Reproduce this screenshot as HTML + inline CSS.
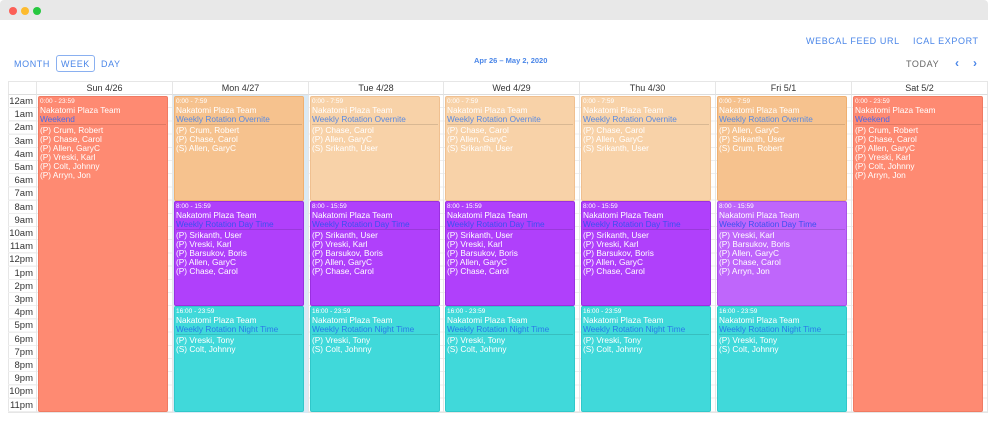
<!DOCTYPE html>
<html><head><meta charset="utf-8"><style>
*{box-sizing:border-box;margin:0;padding:0}
body{width:988px;height:421px;background:#fff;font-family:"Liberation Sans",sans-serif;position:relative;overflow:hidden}
.bar{position:absolute;left:0;top:0;width:988px;height:20px;background:#e8e8e8;border-radius:4px 4px 0 0}
.dot{position:absolute;top:7px;width:8px;height:8px;border-radius:50%}
.a{position:absolute;white-space:nowrap}
.lnk{color:#4a86e8;font-size:9px;letter-spacing:.6px}
.hd{position:absolute;top:81px;height:14px;border:1px solid #e6e6e6;border-bottom:1px solid #ddd;font-size:9px;color:#333;text-align:center;line-height:12px}
.col{position:absolute;top:95px;height:318px;border-left:1px solid #e6e6e6}
.tl{position:absolute;left:8px;width:28px;height:13.2px;border-bottom:1px solid #eee;font-size:9.5px;color:#333;text-align:right;padding-right:3px;line-height:13px}
.ev{position:absolute;width:130px;border-radius:2px;padding:0 1px;overflow:hidden;color:#fff;font-size:8.3px;line-height:9px;white-space:nowrap}
.ev .t{font-size:6.5px;line-height:8px;margin-top:1px}
.ev .r{color:#3f6fe8;border-bottom:1px solid rgba(0,0,0,.12);padding-bottom:0;margin-bottom:1px}
.R{background:#fe8a72;border:1px solid #f07a62}
.O{background:#f6c28e;border:1px solid #f0b070}
.L{background:#f8d2a8;border:1px solid #f0c090}
.P{background:#b040fb;border:1px solid #9a30e0}
.Q{background:#bf66fb;border:1px solid #a850e8}
.C{background:#40d9da;border:1px solid #30c8ca}
.O .r,.L .r{color:#5a8ae0}
.R .r{color:#4a6ae8}
.P .r,.Q .r{color:#3a50f0}
.C .r{color:#2a7ae8}
</style></head><body>
<div class="bar"><div class="dot" style="left:9px;background:#fc5f57"></div><div class="dot" style="left:21px;background:#fdbb2e"></div><div class="dot" style="left:33px;background:#27c840"></div></div>
<div class="a lnk" style="left:806px;top:36px">WEBCAL FEED URL</div>
<div class="a lnk" style="left:913px;top:36px">ICAL EXPORT</div>
<div class="a lnk" style="left:14px;top:59px">MONTH</div>
<div class="a" style="left:56px;top:55px;width:39px;height:17px;border:1px solid #8ab0f0;border-radius:3px"></div>
<div class="a lnk" style="left:61px;top:59px">WEEK</div>
<div class="a lnk" style="left:101px;top:59px">DAY</div>
<div class="a" style="left:474px;top:56px;font-size:7.5px;font-weight:bold;color:#4a86e8">Apr 26 – May 2, 2020</div>
<div class="a" style="left:906px;top:59px;font-size:9px;color:#666;letter-spacing:.6px">TODAY</div>
<div class="a" style="left:955px;top:56px;font-size:12px;color:#4a86e8;font-weight:bold">‹</div>
<div class="a" style="left:973px;top:56px;font-size:12px;color:#4a86e8;font-weight:bold">›</div>

<div class="hd" style="left:8px;width:29px"></div>
<div class="hd" style="left:36px;width:137px">Sun 4/26</div>
<div class="hd" style="left:172px;width:137px">Mon 4/27</div>
<div class="hd" style="left:308px;width:136px">Tue 4/28</div>
<div class="hd" style="left:443px;width:137px">Wed 4/29</div>
<div class="hd" style="left:579px;width:137px">Thu 4/30</div>
<div class="hd" style="left:715px;width:137px">Fri 5/1</div>
<div class="hd" style="left:851px;width:137px">Sat 5/2</div>

<div style="position:absolute;left:8px;top:95px;width:980px;height:318px;border:1px solid #e6e6e6;border-top:none;background:repeating-linear-gradient(to bottom,transparent 0,transparent 12.2px,#eee 12.2px,#eee 13.2px)"></div>
<div class="col" style="left:172px;width:136px;background:#dbeaf5"></div>
<div class="col" style="left:36px;width:0"></div><div class="col" style="left:308px;width:0"></div><div class="col" style="left:443px;width:0"></div><div class="col" style="left:579px;width:0"></div><div class="col" style="left:715px;width:0"></div><div class="col" style="left:851px;width:0"></div>

<div class="tl" style="top:95px">12am</div><div class="tl" style="top:108.2px">1am</div><div class="tl" style="top:121.4px">2am</div><div class="tl" style="top:134.6px">3am</div><div class="tl" style="top:147.8px">4am</div><div class="tl" style="top:161px">5am</div><div class="tl" style="top:174.2px">6am</div><div class="tl" style="top:187.4px">7am</div><div class="tl" style="top:200.6px">8am</div><div class="tl" style="top:213.8px">9am</div><div class="tl" style="top:227px">10am</div><div class="tl" style="top:240.2px">11am</div><div class="tl" style="top:253.4px">12pm</div><div class="tl" style="top:266.6px">1pm</div><div class="tl" style="top:279.8px">2pm</div><div class="tl" style="top:293px">3pm</div><div class="tl" style="top:306.2px">4pm</div><div class="tl" style="top:319.4px">5pm</div><div class="tl" style="top:332.6px">6pm</div><div class="tl" style="top:345.8px">7pm</div><div class="tl" style="top:359px">8pm</div><div class="tl" style="top:372.2px">9pm</div><div class="tl" style="top:385.4px">10pm</div><div class="tl" style="top:398.6px">11pm</div>

<div class="ev R" style="left:38px;top:96px;height:316px"><div class="t">0:00 - 23:59</div><div>Nakatomi Plaza Team</div><div class="r">Weekend</div><div>(P) Crum, Robert</div><div>(P) Chase, Carol</div><div>(P) Allen, GaryC</div><div>(P) Vreski, Karl</div><div>(P) Colt, Johnny</div><div>(P) Arryn, Jon</div></div>
<div class="ev R" style="left:853px;top:96px;height:316px"><div class="t">0:00 - 23:59</div><div>Nakatomi Plaza Team</div><div class="r">Weekend</div><div>(P) Crum, Robert</div><div>(P) Chase, Carol</div><div>(P) Allen, GaryC</div><div>(P) Vreski, Karl</div><div>(P) Colt, Johnny</div><div>(P) Arryn, Jon</div></div>

<div class="ev O" style="left:174px;top:96px;height:105px"><div class="t">0:00 - 7:59</div><div>Nakatomi Plaza Team</div><div class="r">Weekly Rotation Overnite</div><div>(P) Crum, Robert</div><div>(P) Chase, Carol</div><div>(S) Allen, GaryC</div></div>
<div class="ev P" style="left:174px;top:201px;height:105px"><div class="t">8:00 - 15:59</div><div>Nakatomi Plaza Team</div><div class="r">Weekly Rotation Day Time</div><div>(P) Srikanth, User</div><div>(P) Vreski, Karl</div><div>(P) Barsukov, Boris</div><div>(P) Allen, GaryC</div><div>(P) Chase, Carol</div></div>
<div class="ev C" style="left:174px;top:306px;height:106px"><div class="t">16:00 - 23:59</div><div>Nakatomi Plaza Team</div><div class="r">Weekly Rotation Night Time</div><div>(P) Vreski, Tony</div><div>(S) Colt, Johnny</div></div>

<div class="ev L" style="left:310px;top:96px;height:105px"><div class="t">0:00 - 7:59</div><div>Nakatomi Plaza Team</div><div class="r">Weekly Rotation Overnite</div><div>(P) Chase, Carol</div><div>(P) Allen, GaryC</div><div>(S) Srikanth, User</div></div>
<div class="ev P" style="left:310px;top:201px;height:105px"><div class="t">8:00 - 15:59</div><div>Nakatomi Plaza Team</div><div class="r">Weekly Rotation Day Time</div><div>(P) Srikanth, User</div><div>(P) Vreski, Karl</div><div>(P) Barsukov, Boris</div><div>(P) Allen, GaryC</div><div>(P) Chase, Carol</div></div>
<div class="ev C" style="left:310px;top:306px;height:106px"><div class="t">16:00 - 23:59</div><div>Nakatomi Plaza Team</div><div class="r">Weekly Rotation Night Time</div><div>(P) Vreski, Tony</div><div>(S) Colt, Johnny</div></div>

<div class="ev L" style="left:445px;top:96px;height:105px"><div class="t">0:00 - 7:59</div><div>Nakatomi Plaza Team</div><div class="r">Weekly Rotation Overnite</div><div>(P) Chase, Carol</div><div>(P) Allen, GaryC</div><div>(S) Srikanth, User</div></div>
<div class="ev P" style="left:445px;top:201px;height:105px"><div class="t">8:00 - 15:59</div><div>Nakatomi Plaza Team</div><div class="r">Weekly Rotation Day Time</div><div>(P) Srikanth, User</div><div>(P) Vreski, Karl</div><div>(P) Barsukov, Boris</div><div>(P) Allen, GaryC</div><div>(P) Chase, Carol</div></div>
<div class="ev C" style="left:445px;top:306px;height:106px"><div class="t">16:00 - 23:59</div><div>Nakatomi Plaza Team</div><div class="r">Weekly Rotation Night Time</div><div>(P) Vreski, Tony</div><div>(S) Colt, Johnny</div></div>

<div class="ev L" style="left:581px;top:96px;height:105px"><div class="t">0:00 - 7:59</div><div>Nakatomi Plaza Team</div><div class="r">Weekly Rotation Overnite</div><div>(P) Chase, Carol</div><div>(P) Allen, GaryC</div><div>(S) Srikanth, User</div></div>
<div class="ev P" style="left:581px;top:201px;height:105px"><div class="t">8:00 - 15:59</div><div>Nakatomi Plaza Team</div><div class="r">Weekly Rotation Day Time</div><div>(P) Srikanth, User</div><div>(P) Vreski, Karl</div><div>(P) Barsukov, Boris</div><div>(P) Allen, GaryC</div><div>(P) Chase, Carol</div></div>
<div class="ev C" style="left:581px;top:306px;height:106px"><div class="t">16:00 - 23:59</div><div>Nakatomi Plaza Team</div><div class="r">Weekly Rotation Night Time</div><div>(P) Vreski, Tony</div><div>(S) Colt, Johnny</div></div>

<div class="ev O" style="left:717px;top:96px;height:105px"><div class="t">0:00 - 7:59</div><div>Nakatomi Plaza Team</div><div class="r">Weekly Rotation Overnite</div><div>(P) Allen, GaryC</div><div>(P) Srikanth, User</div><div>(S) Crum, Robert</div></div>
<div class="ev Q" style="left:717px;top:201px;height:105px"><div class="t">8:00 - 15:59</div><div>Nakatomi Plaza Team</div><div class="r">Weekly Rotation Day Time</div><div>(P) Vreski, Karl</div><div>(P) Barsukov, Boris</div><div>(P) Allen, GaryC</div><div>(P) Chase, Carol</div><div>(P) Arryn, Jon</div></div>
<div class="ev C" style="left:717px;top:306px;height:106px"><div class="t">16:00 - 23:59</div><div>Nakatomi Plaza Team</div><div class="r">Weekly Rotation Night Time</div><div>(P) Vreski, Tony</div><div>(S) Colt, Johnny</div></div>
</body></html>
